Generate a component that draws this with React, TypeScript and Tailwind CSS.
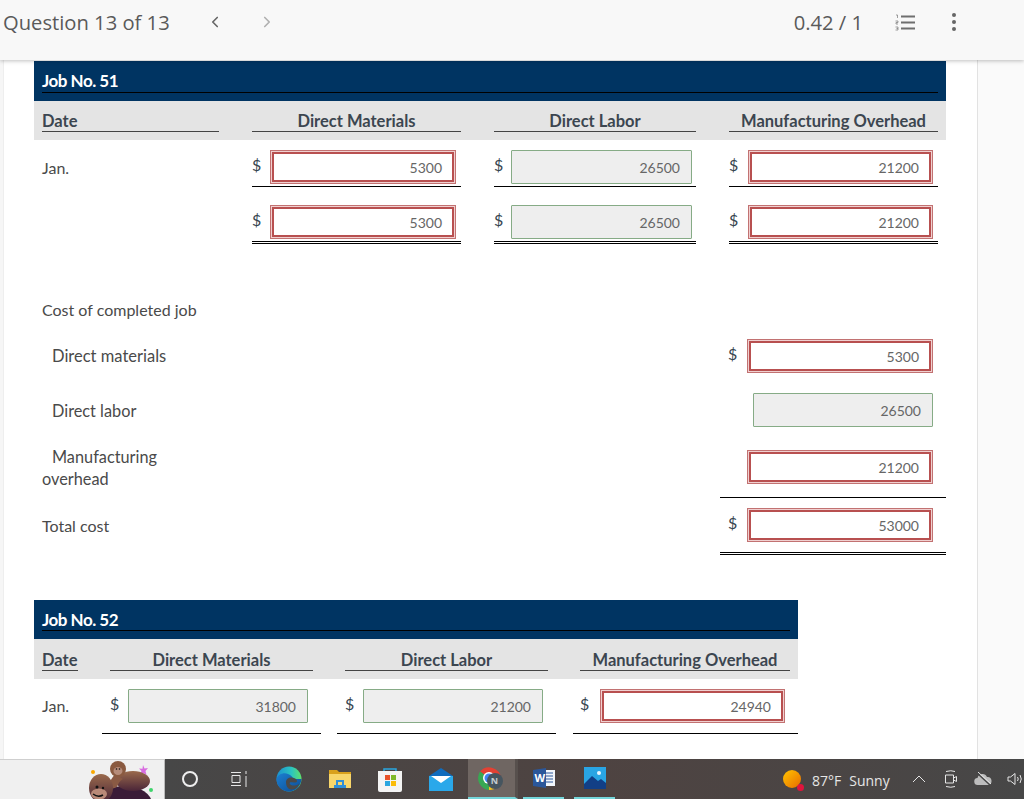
import React from 'react';
import { ChevronLeft, ChevronRight } from 'lucide-react';

const Money: React.FC<{ value: string; kind: 'red' | 'green'; dollar?: boolean; boxClass: string; className?: string }> = ({ value, kind, dollar = true, boxClass, className = '' }) => (
  <div className={`flex items-center justify-between ${className}`}>
    <span className="text-[16px] leading-[24px] text-[#36454f] -mt-[4px]">{dollar ? '$' : ''}</span>
    {kind === 'red' ? (
      <div className={`h-[34px] border border-[#c27272] bg-[#f0d0d0] p-[1px] ${boxClass}`}>
        <div className="h-full border-2 border-[#b85050] bg-white flex items-center justify-end pr-[10px] text-[14px] text-[#666]">{value}</div>
      </div>
    ) : (
      <div className={`h-[34px] rounded-[1px] border border-[#86ab86] bg-[#eeeeee] flex items-center justify-end pr-[11px] text-[14px] text-[#666] ${boxClass}`}>{value}</div>
    )}
  </div>
);

const Job51: React.FC = () => {
  const heads = ['Direct Materials', 'Direct Labor', 'Manufacturing Overhead'];
  return (
    <div className="w-[912px]">
      <div className="h-[40px] bg-[#003462] px-2">
        <div className="pt-[8px] leading-[23px] border-b border-black text-white font-bold text-[17px] tracking-[-0.5px]">Job No. 51</div>
      </div>
      <div className="h-[39px] bg-[#e4e4e4] px-2 grid grid-cols-[177px_209px_202px_209px] gap-x-[33px] text-[16.500px] font-bold text-[#3c4650]">
        <div className="pt-[10px] leading-[20px] border-b border-[#444] self-start">Date</div>
        {heads.map((h) => (
          <div key={h} className="pt-[10px] leading-[20px] border-b border-[#444] self-start text-center">{h}</div>
        ))}
      </div>
      <div className="px-2 grid grid-cols-[177px_209px_202px_209px] gap-x-[33px]">
        <div className="pt-[16px] leading-[24px] text-[16px] text-[#4a4a4a]">Jan.</div>
        <div className="pt-[10px] pb-[2px] border-b border-black">
          <Money value="5300" kind="red" boxClass="w-[186px]" className="mr-[5px]" />
        </div>
        <div className="pt-[10px] pb-[2px] border-b border-black">
          <Money value="26500" kind="green" boxClass="w-[181px]" className="mr-[4px]" />
        </div>
        <div className="pt-[10px] pb-[2px] border-b border-black">
          <Money value="21200" kind="red" boxClass="w-[185px]" className="mr-[5px]" />
        </div>
        <div />
        <div className="pt-[18px] pb-[2px] border-b-[3px] border-double border-black">
          <Money value="5300" kind="red" boxClass="w-[186px]" className="mr-[5px]" />
        </div>
        <div className="pt-[18px] pb-[2px] border-b-[3px] border-double border-black">
          <Money value="26500" kind="green" boxClass="w-[181px]" className="mr-[4px]" />
        </div>
        <div className="pt-[18px] pb-[2px] border-b-[3px] border-double border-black">
          <Money value="21200" kind="red" boxClass="w-[185px]" className="mr-[5px]" />
        </div>
      </div>
    </div>
  );
};

const CostSummary: React.FC = () => (
  <div className="w-[912px] text-[16px] text-[#4a4a4a]">
    <div className="mt-[54px] pl-2 leading-[24px]">Cost of completed job</div>
    <div className="mt-[17px] flex justify-between items-center">
      <div className="pl-[18px] pt-[1px] text-[16.500px]">Direct materials</div>
      <div className="w-[226px] pl-[8px] pr-[13px]">
        <Money value="5300" kind="red" boxClass="w-[186px]" />
      </div>
    </div>
    <div className="mt-[20px] flex justify-between items-center">
      <div className="pl-[18px] pt-[2px] text-[16.300px]">Direct labor</div>
      <div className="w-[226px] pl-[8px] pr-[13px]">
        <Money value="26500" kind="green" dollar={false} boxClass="w-[180px]" />
      </div>
    </div>
    <div className="mt-[19px] flex justify-between items-start">
      <div className="pl-2 w-[150px] leading-[22px] indent-[10px] text-[16.300px]">Manufacturing overhead</div>
      <div className="w-[226px] pl-[8px] pr-[13px] pt-[4px] border-b border-black pb-[13px]">
        <Money value="21200" kind="red" dollar={false} boxClass="w-[186px]" />
      </div>
    </div>
    <div className="flex justify-between items-center">
      <div className="pl-2 pb-[2px]">Total cost</div>
      <div className="w-[226px] pl-[8px] pr-[13px] pt-[10px] pb-[10px] border-b-[3px] border-double border-black">
        <Money value="53000" kind="red" boxClass="w-[186px]" />
      </div>
    </div>
  </div>
);

const Job52: React.FC = () => (
  <div className="w-[764px] mt-[45px]">
    <div className="h-[39px] bg-[#003462] px-2">
      <div className="pt-[9px] leading-[21px] border-b border-black text-white font-bold text-[17px] tracking-[-0.5px]">Job No. 52</div>
    </div>
    <div className="h-[40px] bg-[#e4e4e4] px-2 flex text-[16.500px] font-bold text-[#3c4650]">
      <div className="w-[36px] pt-[11px] leading-[20px] border-b border-[#444] self-start">Date</div>
      <div className="ml-[32px] w-[203px] pt-[11px] leading-[20px] border-b border-[#444] self-start text-center">Direct Materials</div>
      <div className="ml-[32px] w-[203px] pt-[11px] leading-[20px] border-b border-[#444] self-start text-center">Direct Labor</div>
      <div className="ml-[32px] w-[210px] pt-[11px] leading-[20px] border-b border-[#444] self-start text-center">Manufacturing Overhead</div>
    </div>
    <div className="flex">
      <div className="w-[68px] pl-2 pt-[15px] leading-[24px] text-[16px] text-[#4a4a4a]">Jan.</div>
      <div className="w-[219px] pt-[10px] pb-[10px] pl-[8px] pr-[13px] border-b border-black">
        <Money value="31800" kind="green" boxClass="w-[180px]" />
      </div>
      <div className="w-[219px] ml-[16px] pt-[10px] pb-[10px] pl-[8px] pr-[13px] border-b border-black">
        <Money value="21200" kind="green" boxClass="w-[180px]" />
      </div>
      <div className="w-[225px] ml-[17px] pt-[10px] pb-[10px] pl-[7px] pr-[13px] border-b border-black">
        <Money value="24940" kind="red" boxClass="w-[185px]" />
      </div>
    </div>
  </div>
);

const Gorilla = () => (
  <svg width="75" height="40" viewBox="0 0 75 40">
    <defs>
      <linearGradient id="fur" x1="0" y1="0" x2="0" y2="1">
        <stop offset="0" stopColor="#9a6a4c" />
        <stop offset="1" stopColor="#4a2538" />
      </linearGradient>
    </defs>
    <circle cx="4" cy="12" r="2" fill="#f9a800" />
    <path d="M54 5l1.500 3.500L59 8l-2.500 3 1 4-3-2-3.500 1.500 1.500-3.500-2.500-2.500 3.500.2z" fill="#d86be0" />
    <circle cx="62" cy="30" r="2" fill="#3fd46c" />
    <ellipse cx="36" cy="44" rx="27" ry="18" fill="#3a1c38" />
    <ellipse cx="44" cy="21" rx="17" ry="10" fill="url(#fur)" />
    <path d="M26 14q-8 10-6 16l8-3q2-6 6-8z" fill="#8a5a44" />
    <ellipse cx="12" cy="28" rx="12" ry="14" fill="url(#fur)" />
    <ellipse cx="10" cy="34" rx="8" ry="5.500" fill="#b98a78" />
    <circle cx="8" cy="27" r="1.500" fill="#111" />
    <circle cx="14" cy="28" r="1.200" fill="#111" />
    <path d="M4 34q5 4 10 1" stroke="#111" strokeWidth="1.500" fill="none" />
    <circle cx="29" cy="9" r="8" fill="#8a5a40" />
    <ellipse cx="29" cy="11" rx="4.500" ry="4" fill="#b68c7a" />
    <circle cx="27.500" cy="9" r="0.800" fill="#111" />
    <circle cx="30.500" cy="9" r="0.800" fill="#111" />
  </svg>
);

const Edge = () => (
  <svg width="26" height="26" viewBox="0 0 26 26">
    <defs>
      <linearGradient id="eg" x1="0" y1="0.500" x2="1" y2="0.500">
        <stop offset="0" stopColor="#1b8fd0" />
        <stop offset="0.600" stopColor="#2bc4c0" />
        <stop offset="1" stopColor="#5fe06a" />
      </linearGradient>
      <linearGradient id="eb" x1="0" y1="0" x2="1" y2="1">
        <stop offset="0" stopColor="#1c7fd0" />
        <stop offset="1" stopColor="#0c4c96" />
      </linearGradient>
    </defs>
    <circle cx="13" cy="13" r="12.500" fill="url(#eg)" />
    <path d="M.5 13C2 8 8 6 12 8c3 1 5 3 5 5h8.500C25 20 19 25.500 13 25.500 6 25.500.5 20 .5 13z" fill="url(#eb)" />
    <path d="M10 16c0-3 3-5 6-4.500 3 .4 5 1.500 5 3.500 0 1-1 1.500-3 1.500-2 0-3-.5-4 0-1 .8 0 3 4 3 2 0 4-.5 5.500-2-1 3-4 6-8 6-4 0-5.500-4-5.500-7.500z" fill="#4a4a4a" />
  </svg>
);

const Explorer = () => (
  <svg width="24" height="20" viewBox="0 0 24 20">
    <path d="M1 1h8l2 2h12v3H1z" fill="#d9a11c" />
    <path d="M1 5h22v14H1z" fill="#f8d66a" />
    <path d="M8 11h8v5h2v3H6v-3h2z" fill="#2f8fd8" />
    <path d="M10 13h4v3h-4z" fill="#f8d66a" />
  </svg>
);

const Store = () => (
  <svg width="24" height="25" viewBox="0 0 24 25">
    <path d="M6 6V2h12v4" fill="none" stroke="#2aa6e0" strokeWidth="1.500" />
    <path d="M0 4h24v19a2 2 0 0 1-2 2H2a2 2 0 0 1-2-2z" fill="#f4f4f4" />
    <rect x="7" y="8" width="5" height="5" fill="#e8532a" />
    <rect x="13" y="8" width="5" height="5" fill="#7fba2a" />
    <rect x="7" y="14" width="5" height="5" fill="#2aa6e0" />
    <rect x="13" y="14" width="5" height="5" fill="#fbbc09" />
  </svg>
);

const Mail = () => (
  <svg width="24" height="23" viewBox="0 0 24 23">
    <path d="M12 0l12 8v2H0V8z" fill="#0f6cbd" />
    <path d="M0 8h24v15H0z" fill="#2aa8ea" />
    <path d="M2 8h20l-10 7z" fill="#ffffff" />
  </svg>
);

const Chrome = () => (
  <div className="relative w-[30px] h-[26px]">
    <svg width="24" height="24" viewBox="0 0 24 24" className="mt-[1px]">
      <path d="M12 12L3 5.500A12 12 0 0 1 24 12z" fill="#e34133" />
      <path d="M12 12l12 0a12 12 0 0 1-12 12z" fill="#f8c41d" />
      <path d="M12 12v12A12 12 0 0 1 3 5.500z" fill="#38a853" />
      <circle cx="12" cy="12" r="6" fill="#fff" />
      <circle cx="12" cy="12" r="4.500" fill="#4285f4" />
    </svg>
    <div className="absolute left-[10px] top-[8px] w-[16px] h-[16px] rounded-full bg-[#46555f] text-[#c5ccd0] text-[9px] font-bold flex items-center justify-center">N</div>
  </div>
);

const Word = () => (
  <div className="relative w-[22px] h-[20px]">
    <svg width="22" height="20" viewBox="0 0 22 20">
      <path d="M8 2h14v16H8z" fill="#f2f6fb" />
      <path d="M13 5h7M13 8h7M13 11h7M13 14h7" stroke="#2b579a" strokeWidth="1" />
      <path d="M0 2l13-2v20L0 18z" fill="#2b579a" />
    </svg>
    <span className="absolute left-[2px] top-[3px] text-[11px] leading-[14px] font-bold text-white">W</span>
  </div>
);

const Photos = () => (
  <svg width="22" height="22" viewBox="0 0 22 22">
    <rect width="22" height="22" fill="#29a5e4" />
    <circle cx="15" cy="6" r="2" fill="#e8f6ff" />
    <path d="M0 17l8-8 6 5 3-2 5 4v6H0z" fill="#123f86" />
  </svg>
);

const Taskbar: React.FC = () => {
  const apps = [<Edge key="e" />, <Explorer key="f" />, <Store key="s" />, <Mail key="m" />];
  return (
    <div className="h-[40px] flex shrink-0 font-['Open_Sans',sans-serif]">
      <div className="w-[165px] h-full bg-[#f0f0f0] border-t border-[#cfcfcf] border-r border-r-[#bbb] flex justify-end">
        <Gorilla />
      </div>
      <div className="flex-1 flex items-center bg-gradient-to-r from-[#474747] via-[#4e4341] to-[#474747] text-[#e6e6e6]">
        <div className="w-[49px] flex justify-center">
          <div className="w-[16px] h-[16px] rounded-full border-[2.500px] border-[#eeeeee]" />
        </div>
        <div className="w-[50px] flex justify-center">
          <svg width="18" height="18" viewBox="0 0 18 18" fill="none" stroke="#e6e6e6" strokeWidth="1">
            <path d="M1 2.500h10M1 15.500h10M2 5.500h8v7H2zM16 1v3M16 6v11" />
          </svg>
        </div>
        {apps.map((icon, i) => (
          <div key={i} className="w-[50.500px] flex justify-center">{icon}</div>
        ))}
        <div className="w-[50px] h-full flex items-center justify-center bg-[#6f6662] border-b-2 border-b-[#74d6da] border-r-[3px] border-r-[#57504d] ml-[2px]">
          <Chrome />
        </div>
        <div className="w-[41px] h-full ml-[5px] flex items-center justify-center border-b-2 border-[#74d6da]">
          <Word />
        </div>
        <div className="w-[41px] h-full ml-[10px] flex items-center justify-center border-b-2 border-[#74d6da]">
          <Photos />
        </div>
        <div className="relative ml-[168px] w-[18px] h-[18px] rounded-full bg-gradient-to-br from-[#ffc400] to-[#e56a00]">
          <div className="absolute right-[-3px] bottom-[-3px] w-[7px] h-[7px] rounded-full bg-[#e0143c]" />
        </div>
        <div className="ml-[11px] mt-[3px] text-[14px] flex gap-[8px] whitespace-nowrap">
          <span>87°F</span>
          <span>Sunny</span>
        </div>
        <svg className="ml-[22px]" width="14" height="8" viewBox="0 0 14 8" fill="none" stroke="#e6e6e6" strokeWidth="1">
          <path d="M1 7l6-6 6 6" />
        </svg>
        <svg className="ml-[18px]" width="14" height="18" viewBox="0 0 14 18" fill="none" stroke="#e6e6e6" strokeWidth="1">
          <path d="M2 1.500q5-1.500 9 0M2 16.500q5 1.500 9 0M1.500 5h8v8h-8zM9.500 8l3-1.500v5l-3-1.500" />
        </svg>
        <svg className="ml-[16px]" width="18" height="14" viewBox="0 0 18 14">
          <path d="M4 13a3.500 3.500 0 0 1-.5-7A5 5 0 0 1 13 5a4 4 0 0 1 1 8z" fill="#bdbdbd" />
          <path d="M3 1l13 12" stroke="#474747" strokeWidth="1.500" />
          <path d="M4 0l13 12" stroke="#e6e6e6" strokeWidth="1" />
        </svg>
        <svg className="ml-[15px]" width="16" height="14" viewBox="0 0 16 14" fill="none" stroke="#e6e6e6" strokeWidth="1">
          <path d="M1 5h2.500L8 1.500v11L3.500 9H1zM10.500 5q1.500 2 0 4M13 3q2.500 4 0 8" />
        </svg>
      </div>
    </div>
  );
};

export default function App() {
  return (
    <div className="w-[1024px] h-[799px] overflow-hidden flex flex-col bg-white font-['Lato',sans-serif]">
      <header className="relative z-10 h-[60px] shrink-0 bg-[#f8f8f8] shadow-[0_1px_4px_rgba(0,0,0,0.25)] flex items-center pl-[3px] pb-[16px] font-['Open_Sans',sans-serif] text-[#5a5a5a]">
        <span className="text-[20.200px]">Question 13 of 13</span>
        <ChevronLeft className="ml-[36px] text-[#666]" size={18} strokeWidth={2.200} />
        <ChevronRight className="ml-[34px] text-[#b0b0b0]" size={18} strokeWidth={2.200} />
        <span className="ml-auto text-[20.200px]">0.42 / 1</span>
        <svg className="ml-[32px]" width="20" height="17" viewBox="0 0 20 17" fill="none">
          <path d="M6 2.500h14M6 8.500h14M6 14.500h14" stroke="#6f6f6f" strokeWidth="1.800" />
          <path d="M1 1h1.500v3M0.500 7h2.500v1.500H1V10h2M0.500 13H3v3H0.500M1.500 14.500H3" stroke="#777" strokeWidth="0.700" />
        </svg>
        <div className="ml-[37px] mr-[68px] flex flex-col gap-[3px]">
          <div className="w-[4px] h-[4px] rounded-full bg-[#666]" />
          <div className="w-[4px] h-[4px] rounded-full bg-[#666]" />
          <div className="w-[4px] h-[4px] rounded-full bg-[#666]" />
        </div>
      </header>
      <div className="flex-1 min-h-0 flex overflow-hidden">
        <div className="w-[4px] bg-[#f6f6f6] border-r border-[#eeeeee]" />
        <main className="w-[973px] pl-[30px] pt-[1px]">
          <Job51 />
          <CostSummary />
          <Job52 />
        </main>
        <div className="flex-1 bg-[#fafafa] border-l border-[#e2e2e2]" />
      </div>
      <Taskbar />
    </div>
  );
}
